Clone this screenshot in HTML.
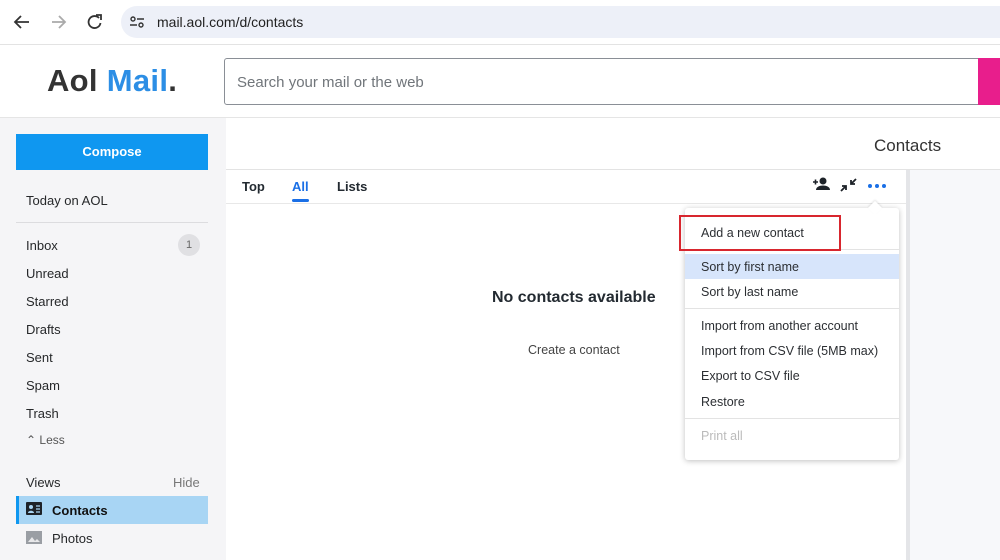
<!DOCTYPE html>
<html><head><style>
*{margin:0;padding:0;box-sizing:border-box}
body{width:1000px;height:560px;overflow:hidden;font-family:"Liberation Sans",sans-serif;background:#fff;position:relative;color:#232a31}
.a{position:absolute}
.side{left:0;top:118px;width:226px;height:442px;background:#f5f5f7}
.si{position:absolute;left:26px;font-size:13px;color:#26282a}
.menu .it{position:absolute;left:16px;font-size:12.5px;color:#2c2f33}
</style></head><body>
<div class="a" style="left:0;top:0;width:1000px;height:45px;background:#fff;border-bottom:1px solid #e3e3e3"></div>
<svg class="a" style="left:12px;top:12px" width="100" height="20" viewBox="0 0 100 20">
<path d="M17 10H4M9 4L3 10l6 6" stroke="#333" stroke-width="1.8" fill="none"/>
<path d="M40 10h13M47 4l6 6-6 6" stroke="#aaa" stroke-width="1.8" fill="none"/>
<path d="M87 6a6 6 0 1 0 1.5 5" stroke="#333" stroke-width="1.8" fill="none"/><path d="M84 3h5v5" stroke="#333" stroke-width="1.8" fill="none"/>
</svg>
<div class="a" style="left:121px;top:6px;width:900px;height:32px;border-radius:16px;background:#edf0f8"></div>
<svg class="a" style="left:129px;top:15px" width="16" height="14"><circle cx="4" cy="4" r="2" stroke="#333" fill="none" stroke-width="1.4"/><path d="M8 4h7M1 10h7" stroke="#333" stroke-width="1.5"/><circle cx="12" cy="10" r="2" stroke="#333" fill="none" stroke-width="1.4"/></svg>
<div class="a" style="left:157px;top:14px;font-size:14px;color:#222">mail.aol.com/d/contacts</div>
<div class="a" style="left:0;top:117px;width:1000px;height:1px;background:#e5e5e5"></div>
<div class="a" style="left:47px;top:63px;font-size:31px;font-weight:bold;letter-spacing:0.3px;white-space:nowrap"><span style="color:#333">Aol</span><span style="color:#2c8ee5"> Mail</span><span style="color:#333">.</span></div>
<div class="a" style="left:224px;top:58px;width:760px;height:47px;border:1px solid #8a8f96;border-radius:3px"></div>
<div class="a" style="left:237px;top:74px;font-size:15px;color:#70757a">Search your mail or the web</div>
<div class="a" style="left:978px;top:58px;width:22px;height:47px;background:#e81e8c"></div>
<div class="a side"></div>
<div class="a" style="left:16px;top:134px;width:192px;height:36px;background:#0f97f0;color:#fff;font-weight:bold;font-size:13px;text-align:center;line-height:36px">Compose</div>
<div class="si" style="top:193px">Today on AOL</div>
<div class="a" style="left:16px;top:222px;width:192px;height:1px;background:#dcdcdf"></div>
<div class="si" style="top:238px">Inbox</div>
<div class="a" style="left:178px;top:234px;width:22px;height:22px;border-radius:11px;background:#e0e0e3;font-size:11px;color:#666;text-align:center;line-height:22px">1</div>
<div class="si" style="top:266px">Unread</div>
<div class="si" style="top:294px">Starred</div>
<div class="si" style="top:322px">Drafts</div>
<div class="si" style="top:350px">Sent</div>
<div class="si" style="top:378px">Spam</div>
<div class="si" style="top:406px">Trash</div>
<div class="si" style="top:433px;font-size:12px;color:#555">⌃ Less</div>
<div class="si" style="top:475px">Views</div>
<div class="a" style="left:173px;top:475px;font-size:13px;color:#777">Hide</div>
<div class="a" style="left:16px;top:496px;width:192px;height:28px;background:#a8d5f4;border-left:3px solid #0f97f0"></div>
<svg class="a" style="left:26px;top:502px" width="16" height="13"><rect width="16" height="13" rx="1" fill="#1d2228"/><circle cx="5" cy="5" r="2" fill="#a8d5f4"/><path d="M2 11c0-3 6-3 6 0z" fill="#a8d5f4"/><path d="M10 4h4M10 7h4M10 10h4" stroke="#a8d5f4" stroke-width="1.3"/></svg>
<div class="si" style="left:52px;top:503px;font-weight:bold;color:#111">Contacts</div>
<svg class="a" style="left:26px;top:531px" width="16" height="13"><rect width="16" height="13" fill="#9a9ea4"/><path d="M2 11l4-5 3 4 2-2 3 3z" fill="#e8e8ea"/></svg>
<div class="si" style="left:52px;top:531px">Photos</div>
<div class="a" style="left:874px;top:136px;font-size:17px;color:#333">Contacts</div>
<div class="a" style="left:226px;top:169px;width:774px;height:1px;background:#e3e3e3"></div>
<div class="a" style="left:226px;top:203px;width:682px;height:1px;background:#e8e8e8"></div>
<div class="a" style="left:906px;top:170px;width:4px;height:390px;background:#e4e5e8"></div>
<div class="a" style="left:910px;top:170px;width:90px;height:390px;background:#f7f8fa"></div>
<div class="a" style="left:242px;top:179px;font-size:13px;font-weight:bold">Top</div>
<div class="a" style="left:292px;top:179px;font-size:13px;font-weight:bold;color:#1a6fe6">All</div>
<div class="a" style="left:292px;top:199px;width:17px;height:3px;border-radius:2px;background:#1a6fe6"></div>
<div class="a" style="left:337px;top:179px;font-size:13px;font-weight:bold">Lists</div>
<svg class="a" style="left:812px;top:176px" width="76" height="18">
<circle cx="11" cy="5" r="3.5" fill="#1d2228"/><path d="M4 14c0-6 14-6 14 0z" fill="#1d2228"/><path d="M1 6h5M3.5 3.5v5" stroke="#1d2228" stroke-width="1.6"/>
<path d="M29 15l5-5M30 10h4v4" stroke="#1d2228" stroke-width="1.8" fill="none"/><path d="M44 3l-5 5M43 8h-4V4" stroke="#1d2228" stroke-width="1.8" fill="none"/>
<circle cx="58" cy="10" r="2" fill="#1a6fe6"/><circle cx="65" cy="10" r="2" fill="#1a6fe6"/><circle cx="72" cy="10" r="2" fill="#1a6fe6"/>
</svg>
<div class="a" style="left:492px;top:289px;font-size:16px;font-weight:bold;color:#232a31">No contacts available</div>
<div class="a" style="left:528px;top:343px;font-size:12.5px;color:#444">Create a contact</div>
<div class="a menu" style="left:685px;top:208px;width:214px;height:252px;background:#fff;border-radius:3px;box-shadow:0 1px 6px rgba(0,0,0,.25)">
<div class="a" style="left:185px;top:-5px;width:10px;height:10px;background:#fff;transform:rotate(45deg);box-shadow:-1px -1px 2px rgba(0,0,0,.1)"></div>
<div class="a" style="left:0;top:41px;width:214px;height:1px;background:#e3e3e3"></div>
<div class="a" style="left:0;top:46px;width:214px;height:25px;background:#d7e5fb"></div>
<div class="a" style="left:0;top:100px;width:214px;height:1px;background:#e3e3e3"></div>
<div class="a" style="left:0;top:210px;width:214px;height:1px;background:#e3e3e3"></div>
<div class="it" style="top:18px">Add a new contact</div>
<div class="it" style="top:52px">Sort by first name</div>
<div class="it" style="top:77px">Sort by last name</div>
<div class="it" style="top:111px">Import from another account</div>
<div class="it" style="top:136px">Import from CSV file (5MB max)</div>
<div class="it" style="top:161px">Export to CSV file</div>
<div class="it" style="top:187px">Restore</div>
<div class="it" style="top:221px;color:#bbb">Print all</div>
</div>
<div class="a" style="left:679px;top:215px;width:162px;height:36px;border:2px solid #d8262e"></div>
</body></html>
